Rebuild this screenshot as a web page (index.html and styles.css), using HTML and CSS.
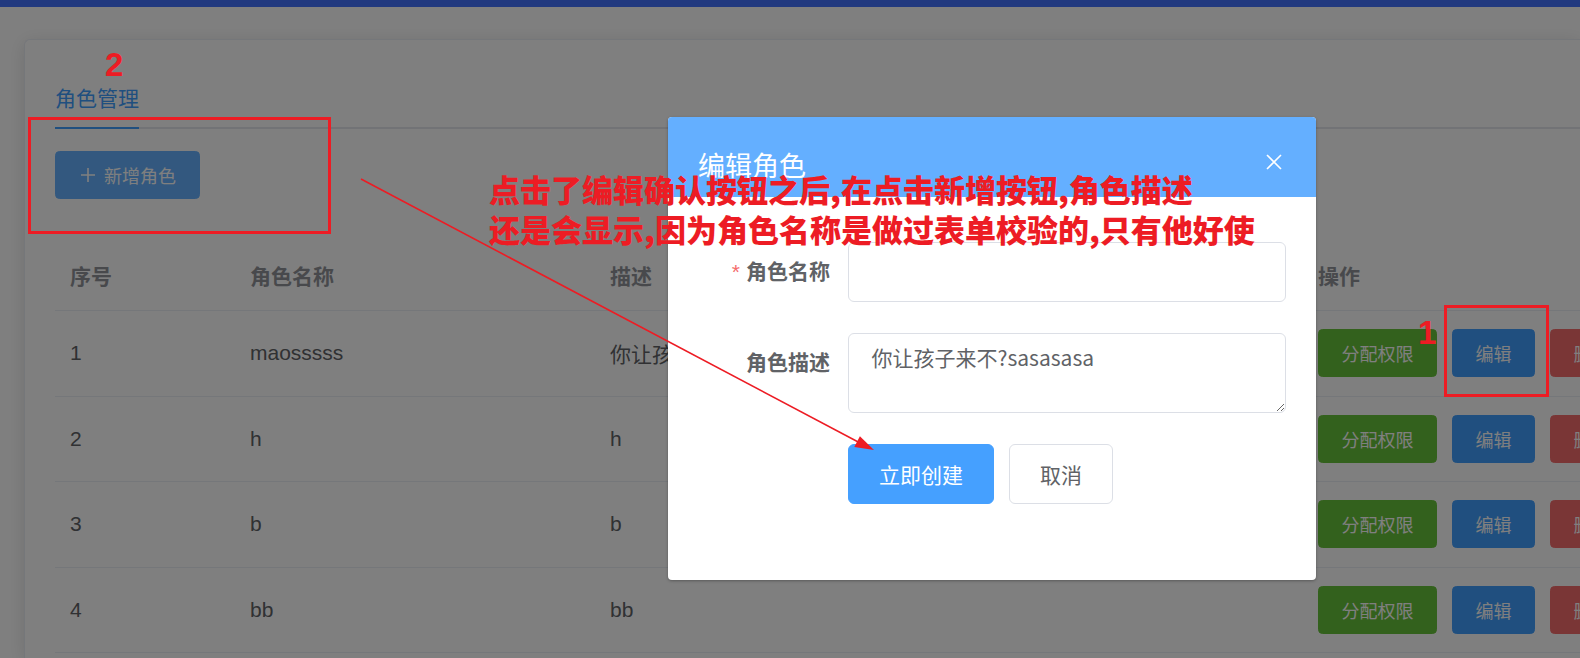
FILE: index.html
```html
<!DOCTYPE html>
<html lang="zh-CN">
<head>
<meta charset="utf-8">
<title>角色管理</title>
<link rel="stylesheet" href="styles.css">
</head>
<body>
<div class="topbar"></div>
<main class="page">
  <section class="card">
    <div class="tabs">
      <div class="tab active">角色管理</div>
    </div>
    <div class="toolbar">
      <button class="btn btn-small btn-light">
        <svg class="plus" viewBox="0 0 18 18" width="18" height="18"><path d="M9 2v14M2 9h14" stroke="#fff" stroke-width="1.6" fill="none"/></svg>
        <span>新增角色</span>
      </button>
    </div>
    <div class="table">
      <div class="tr th">
        <div class="td">序号</div><div class="td">角色名称</div><div class="td">描述</div><div class="td">操作</div>
      </div>
      <div class="tr">
        <div class="td">1</div><div class="td">maosssss</div><div class="td">你让孩子来不?sasasasa</div>
        <div class="td ops"><button class="btn btn-small btn-success">分配权限</button><button class="btn btn-small btn-primary">编辑</button><button class="btn btn-small btn-danger">删除</button></div>
      </div>
      <div class="tr">
        <div class="td">2</div><div class="td">h</div><div class="td">h</div>
        <div class="td ops"><button class="btn btn-small btn-success">分配权限</button><button class="btn btn-small btn-primary">编辑</button><button class="btn btn-small btn-danger">删除</button></div>
      </div>
      <div class="tr">
        <div class="td">3</div><div class="td">b</div><div class="td">b</div>
        <div class="td ops"><button class="btn btn-small btn-success">分配权限</button><button class="btn btn-small btn-primary">编辑</button><button class="btn btn-small btn-danger">删除</button></div>
      </div>
      <div class="tr">
        <div class="td">4</div><div class="td">bb</div><div class="td">bb</div>
        <div class="td ops"><button class="btn btn-small btn-success">分配权限</button><button class="btn btn-small btn-primary">编辑</button><button class="btn btn-small btn-danger">删除</button></div>
      </div>
    </div>
  </section>
</main>

<div class="mask"></div>

<div class="dialog">
  <div class="dialog-header">
    <span class="dialog-title">编辑角色</span>
    <svg class="dialog-close" viewBox="0 0 16 16" width="16" height="16"><path d="M1 1L15 15M15 1L1 15" stroke="#fff" stroke-width="1.6" fill="none"/></svg>
  </div>
  <div class="dialog-body">
    <div class="form-item">
      <label class="form-label"><span class="req">*</span>角色名称</label>
      <div class="form-control"><input class="input" type="text" value=""></div>
    </div>
    <div class="form-item">
      <label class="form-label">角色描述</label>
      <div class="form-control"><textarea class="textarea" rows="2">你让孩子来不?sasasasa</textarea></div>
    </div>
    <div class="form-item">
      <div class="form-label"></div>
      <div class="form-control actions">
        <button class="btn btn-default-size btn-primary-solid">立即创建</button>
        <button class="btn btn-default-size btn-plain">取消</button>
      </div>
    </div>
  </div>
</div>

<svg class="marks" width="1580" height="658" viewBox="0 0 1580 658">
  <rect x="29.5" y="118.5" width="300" height="114" fill="none" stroke="#ed1c24" stroke-width="3"/>
  <rect x="1445.5" y="306.5" width="102" height="89" fill="none" stroke="#ed1c24" stroke-width="3"/>
  <line x1="361" y1="179" x2="862" y2="444" stroke="#ed1c24" stroke-width="1.6"/>
  <polygon points="874,450 854.3,446.9 859.9,436.3" fill="#ed1c24"/>
  <text class="mark-num" x="105" y="76">2</text>
  <text class="mark-num" x="1418" y="344">1</text>
</svg>

<div class="note">
  <div>点击了编辑确认按钮之后,在点击新增按钮,角色描述</div>
  <div>还是会显示,因为角色名称是做过表单校验的,只有他好使</div>
</div>
</body>
</html>
```
FILE: styles.css
```css
* { box-sizing: border-box; }
html, body { margin: 0; padding: 0; }
body {
  width: 1580px;
  height: 658px;
  overflow: hidden;
  background: #ffffff;
  font-family: "Liberation Sans", "Noto Sans CJK SC", sans-serif;
  color: #606266;
  position: relative;
}
.topbar {
  height: 7px;
  background: #4273fe;
}
.page {
  padding: 32px 0 0 24px;
}
.card {
  width: 1556px;
  height: 619px;
  overflow: hidden;
  background: #fff;
  border: 1px solid #ebeef5;
  border-right: none;
  border-bottom: none;
  border-radius: 6px 0 0 0;
  box-shadow: 0 3px 18px rgba(0, 0, 0, 0.12);
  padding: 29px 0 0 30px;
}
.tabs {
  display: flex;
  border-bottom: 2px solid #e4e7ed;
  margin-bottom: 22px;
}
.tab {
  height: 60px;
  line-height: 60px;
  font-size: 21px;
  color: #303133;
  margin-bottom: -2px;
}
.tab.active {
  color: #409eff;
  border-bottom: 2px solid #409eff;
}
.toolbar { display: flex; }
.btn {
  font-family: "Liberation Sans", "Noto Sans CJK SC", sans-serif;
  border: 1px solid transparent;
  color: #fff;
  cursor: pointer;
  display: inline-flex;
  align-items: center;
  justify-content: center;
  white-space: nowrap;
  flex: none;
}
.btn-small {
  height: 48px;
  padding: 0 22.5px;
  font-size: 18px;
  border-radius: 4.5px;
}
.btn-light { background: #66b1ff; border-color: #66b1ff; }
.btn-light .plus { margin-right: 7.5px; }
.btn-success { background: #67c23a; border-color: #67c23a; }
.btn-primary { background: #409eff; border-color: #409eff; }
.btn-danger { background: #f56c6c; border-color: #f56c6c; }

.table {
  margin-top: 40px;
  font-size: 21px;
}
.tr {
  display: grid;
  grid-template-columns: 180px 360px 708px 1fr;
  border-bottom: 1px solid #ebeef5;
  align-items: center;
}
.th {
  height: 72px;
  color: #909399;
  font-weight: 700;
}
.tr:not(.th) { height: 85.5px; }
.td {
  padding: 0 15px;
  white-space: nowrap;
  overflow: hidden;
}
.ops {
  display: flex;
  gap: 15px;
}

.mask {
  position: absolute;
  inset: 0;
  background: rgba(0, 0, 0, 0.5);
  z-index: 10;
}

.dialog {
  position: absolute;
  left: 668px;
  top: 117px;
  width: 648px;
  background: #fff;
  border-radius: 4px;
  overflow: hidden;
  box-shadow: 0 1px 3px rgba(0, 0, 0, 0.3);
  z-index: 20;
}
.dialog-header {
  background: #64afff;
  padding: 30px 30px 14px 30px;
  display: flex;
  justify-content: space-between;
  align-items: center;
}
.dialog-title {
  font-family: "Noto Sans CJK SC", sans-serif;
  color: #fff;
  font-size: 27px;
  line-height: 36px;
}
.dialog-close { margin-right: 4px; margin-top: -6px; }
.dialog-body {
  padding: 45px 30px 45px 30px;
}
.form-item {
  display: flex;
  margin-bottom: 31px;
}
.form-label {
  width: 150px;
  flex: none;
  text-align: right;
  padding-right: 18px;
  line-height: 60px;
  font-size: 21px;
  font-weight: 700;
  color: #606266;
}
.req { color: #f56c6c; margin-right: 6px; font-weight: 400; }
.form-control { flex: 1; }
.input {
  display: block;
  width: 100%;
  height: 60px;
  border: 1px solid #dcdfe6;
  border-radius: 6px;
  padding: 0 22.5px;
  font-size: 21px;
  font-family: "Liberation Sans", "Noto Sans CJK SC", sans-serif;
  color: #606266;
  outline: none;
}
.textarea {
  display: block;
  width: 100%;
  height: 80px;
  border: 1px solid #dcdfe6;
  border-radius: 6px;
  padding: 7.5px 22.5px;
  font-size: 21px;
  line-height: 1.5;
  font-family: "Noto Sans CJK SC", sans-serif;
  color: #606266;
  resize: vertical;
  outline: none;
}
.actions {
  display: flex;
  gap: 15px;
}
.btn-default-size {
  height: 60px;
  padding: 0 30px;
  font-size: 21px;
  border-radius: 6px;
}
.btn-primary-solid { background: #45a0ff; border-color: #45a0ff; color: #fff; }
.btn-plain { background: #fff; border-color: #dcdfe6; color: #606266; }

.marks {
  position: absolute;
  left: 0;
  top: 0;
  z-index: 30;
}
.mark-num {
  font-family: "Liberation Sans", sans-serif;
  font-weight: 700;
  font-size: 33px;
  fill: #ed1c24;
}
.note {
  position: absolute;
  left: 489px;
  top: 169px;
  z-index: 31;
  font-family: "Noto Sans CJK SC", sans-serif;
  font-weight: 900;
  font-size: 31px;
  line-height: 40px;
  color: #ed1c24;
  white-space: nowrap;
}
```
